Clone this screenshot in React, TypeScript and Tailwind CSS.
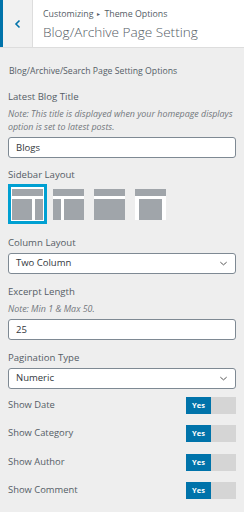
import { useState } from 'react'

const font = { fontFamily: '"Open Sans", "Noto Sans", sans-serif' }

function Toggle({ label, className }: { label: string; className: string }) {
  const [on, setOn] = useState(true)
  return (
    <div className={'flex items-center justify-between h-[17px] ' + className}>
      <span className="text-[9.4px] text-[#555d66]">{label}</span>
      <button onClick={() => setOn(!on)} className="flex w-[50px] h-[17px] bg-[#d5d5d5]">
        {on && (
          <span className="w-[25px] h-full bg-[#0073aa] text-white text-[7.5px] font-bold flex items-center justify-center">
            Yes
          </span>
        )}
      </button>
    </div>
  )
}

function Chevron() {
  return (
    <svg className="w-[9px] h-[9px] text-[#555]" fill="none" stroke="currentColor" viewBox="0 0 10 10">
      <path d="M1.5 3.5L5 6.5l3.5-3" strokeWidth={1.1} />
    </svg>
  )
}

function LayoutIcon({ kind }: { kind: number }) {
  // 31x31 thumbnail: grey header bar, white gap, body split into columns
  return (
    <div className="w-[31px] h-[31px] bg-white flex flex-col">
      <div className="h-[7px] bg-[#a0a5aa]" />
      <div className="flex-1 flex gap-[3px] mt-[3px]">
        {kind === 1 && <div className="w-[8px] bg-[#a0a5aa]" />}
        {kind === 3 && <div className="w-[1px]" />}
        <div className="flex-1 bg-[#a0a5aa]" />
        {kind === 0 && <div className="w-[8px] bg-[#a0a5aa]" />}
        {kind === 3 && <div className="w-[1px]" />}
      </div>
    </div>
  )
}

export default function App() {
  const [layout, setLayout] = useState(0)
  const [title, setTitle] = useState('Blogs')
  const [excerpt, setExcerpt] = useState('25')

  const label = 'text-[9.6px] text-[#555d66] font-medium leading-[14px]'
  const note = 'text-[8.9px] italic text-[#72777c] leading-[13px]'
  const field = 'w-full h-[21px] px-[7px] text-[9.5px] text-[#32373c] bg-white border border-[#7e8993] rounded-[3px] outline-none'

  return (
    <div style={font} className="w-[244px] h-[512px] bg-[#eeeeee] overflow-hidden">
      {/* Header */}
      <div className="flex h-[48px] bg-white border-b border-[#dddddd]">
        <div className="w-[3px] bg-[#0073aa]" />
        <button className="w-[30px] bg-[#f1f1f1] border-r border-[#dddddd] flex items-center justify-center">
          <svg className="w-[10px] h-[10px] text-[#0073aa]" fill="none" stroke="currentColor" viewBox="0 0 10 10">
            <path d="M6.5 1.5L3 5l3.5 3.5" strokeWidth={1.6} />
          </svg>
        </button>
        <div className="pl-[10px] pt-[7px]">
          <div className="text-[8.8px] text-[#555d66] flex items-center gap-[4px] leading-[14px]">
            Customizing <span className="text-[6px]">▸</span> Theme Options
          </div>
          <div className="text-[13.6px] text-[#555d66] font-light leading-[20px] mt-[1px]">Blog/Archive Page Setting</div>
        </div>
      </div>

      <div className="px-[8px] pt-[16px]">
        <p className="text-[8.7px] text-[#555d66] leading-[14px] pl-[1px]">Blog/Archive/Search Page Setting Options</p>

        <div className={label + ' mt-[12px]'}>Latest Blog Title</div>
        <p className={note + ' mt-[3px]'}>
          Note: This title is displayed when your homepage displays option is set to latest posts.
        </p>
        <input value={title} onChange={(e) => setTitle(e.target.value)} className={field} />

        <div className={label + ' mt-[10px]'}>Sidebar Layout</div>
        <div className="flex gap-[2px] mt-[2px]">
          {[0, 1, 2, 3].map((k) => (
            <button
              key={k}
              onClick={() => setLayout(k)}
              className={
                'w-[39px] h-[40px] border-[3px] p-[1px] flex items-center justify-center ' +
                (k === layout ? 'border-[#00a0d2] bg-white' : 'border-transparent')
              }
            >
              <LayoutIcon kind={k} />
            </button>
          ))}
        </div>

        <div className={label + ' mt-[12px]'}>Column Layout</div>
        <div className={field + ' mt-[3px] flex items-center justify-between'}>
          <span>Two Column</span>
          <Chevron />
        </div>

        <div className={label + ' mt-[11px]'}>Excerpt Length</div>
        <p className={note + ' mt-[3px]'}>Note: Min 1 &amp; Max 50.</p>
        <input value={excerpt} onChange={(e) => setExcerpt(e.target.value)} className={field + ' mt-[3px]'} />

        <div className={label + ' mt-[11px]'}>Pagination Type</div>
        <div className={field + ' mt-[3px] flex items-center justify-between'}>
          <span>Numeric</span>
          <Chevron />
        </div>

        <Toggle label="Show Date" className="mt-[8px]" />
        <Toggle label="Show Category" className="mt-[11px]" />
        <Toggle label="Show Author" className="mt-[12px]" />
        <Toggle label="Show Comment" className="mt-[11px]" />
      </div>
    </div>
  )
}
